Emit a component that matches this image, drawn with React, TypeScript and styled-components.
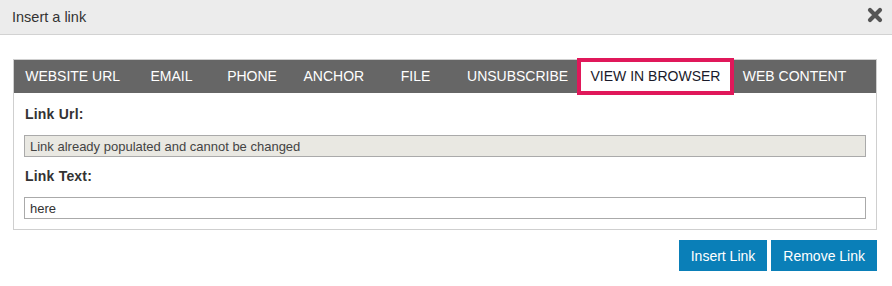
import React, { useState } from 'react';
import styled, { createGlobalStyle } from 'styled-components';

const GlobalStyle = createGlobalStyle`
  html, body {
    margin: 0;
    padding: 0;
    background: #fff;
    font-family: "Liberation Sans", Arial, sans-serif;
  }
`;

const TABS = [
  'WEBSITE URL',
  'EMAIL',
  'PHONE',
  'ANCHOR',
  'FILE',
  'UNSUBSCRIBE',
  'VIEW IN BROWSER',
  'WEB CONTENT',
];

const CloseIcon = () => (
  <svg width="16" height="16" viewBox="0 0 16 16" aria-hidden="true">
    <path
      d="M3 3 L13 13 M13 3 L3 13"
      stroke="currentColor"
      strokeWidth="4.2"
      strokeLinecap="round"
      fill="none"
    />
  </svg>
);

const App = () => {
  const [active, setActive] = useState('VIEW IN BROWSER');

  return (
    <Dialog>
      <GlobalStyle />
      <Header>
        <Title>Insert a link</Title>
        <CloseButton aria-label="Close">
          <CloseIcon />
        </CloseButton>
      </Header>

      <Content>
        <Panel>
          <TabBar>
            {TABS.map((tab) => (
              <Tab key={tab} selected={tab === active} onClick={() => setActive(tab)}>
                {tab}
              </Tab>
            ))}
          </TabBar>

          <PanelBody>
            <Field>
              <Label>Link Url:</Label>
              <TextInput
                disabled
                readOnly
                value="Link already populated and cannot be changed"
              />
            </Field>
            <Field>
              <Label>Link Text:</Label>
              <TextInput defaultValue="here" />
            </Field>
          </PanelBody>
        </Panel>

        <Actions>
          <Button>Insert Link</Button>
          <Button>Remove Link</Button>
        </Actions>
      </Content>
    </Dialog>
  );
};

export default App;

const Dialog = styled.div`
  width: 892px;
  height: 286px;
  background: #fff;
  color: #333;
`;

const Header = styled.div`
  height: 34px;
  background: #ececec;
  border-bottom: 1px solid #d2d2d2;
  display: flex;
  align-items: center;
  justify-content: space-between;
  padding: 0 9px 0 12px;
`;

const Title = styled.div`
  font-size: 14.5px;
  color: #333;
  padding-bottom: 1px;
`;

const CloseButton = styled.button`
  border: 0;
  background: transparent;
  padding: 0;
  width: 16px;
  height: 16px;
  display: flex;
  align-items: center;
  justify-content: center;
  color: #555;
  cursor: pointer;
  margin-bottom: 4px;
`;

const Content = styled.div`
  padding: 24px 15px 0 13px;
`;

const Panel = styled.div`
  border: 1px solid #cfcfcf;
`;

const TabBar = styled.div`
  display: flex;
  background: #666;
  height: 33px;
`;

const Tab = styled.div<{ selected?: boolean }>`
  min-width: 80.5px;
  box-sizing: border-box;
  padding: 0 11.2px;
  line-height: 33px;
  text-align: center;
  font-size: 14px;
  white-space: nowrap;
  cursor: pointer;
  color: ${(p) => (p.selected ? '#1a1a2a' : '#fff')};
  background: ${(p) => (p.selected ? '#fff' : 'transparent')};
  outline: ${(p) => (p.selected ? '4px solid #e0185a' : 'none')};
  outline-offset: -2px;
  position: relative;
`;

const PanelBody = styled.div`
  padding: 10px;
  display: flex;
  flex-direction: column;
  gap: 8px;
`;

const Field = styled.div`
  display: flex;
  flex-direction: column;
`;

const Label = styled.label`
  font-weight: bold;
  font-size: 14px;
  line-height: 22px;
  color: #333;
  padding-left: 1px;
  letter-spacing: 0.2px;
  margin-bottom: 10px;
`;

const TextInput = styled.input`
  box-sizing: border-box;
  width: 100%;
  height: 22px;
  border: 1px solid #aaa;
  padding: 0 5px;
  font-family: "Liberation Sans", Arial, sans-serif;
  font-size: 13px;
  color: #333;
  background: #fff;
  margin: 0;
  outline: none;

  &:disabled {
    background: #e9e8e2;
    color: #444;
    -webkit-text-fill-color: #444;
  }
`;

const Actions = styled.div`
  display: flex;
  justify-content: flex-end;
  gap: 4px;
  margin-top: 10px;
`;

const Button = styled.button`
  height: 31px;
  padding: 0 12px;
  border: 0;
  border-radius: 0;
  background: #0a7fb8;
  color: #fff;
  font-family: "Liberation Sans", Arial, sans-serif;
  font-size: 14px;
  cursor: pointer;
`;
